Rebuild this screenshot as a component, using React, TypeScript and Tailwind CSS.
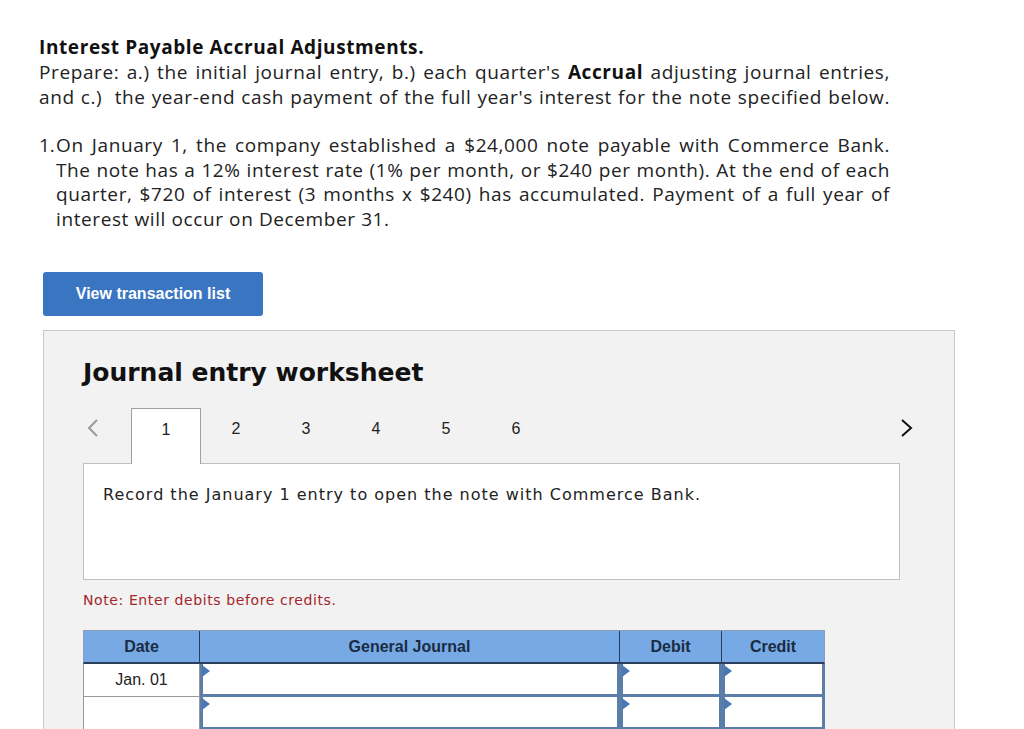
const jl = "block text-justify [text-align-last:justify]";

function Triangle() {
  return (
    <svg className="absolute -left-[1px] top-[1px]" width="8" height="12" viewBox="0 0 8 12">
      <polygon points="0,0 8,6 0,12" fill="#4a78b5" />
    </svg>
  );
}

function InputCell({ w }: { w: string }) {
  return <div className={`relative ${w} h-full border-x-[3px] border-b-[3px] border-[#5b7ea8] bg-white`}><Triangle /></div>;
}

export default function App() {
  const tabs = [1, 2, 3, 4, 5, 6];
  return (
    <div className="min-h-[729px] bg-white pl-[39px] pt-[35px] text-[#222] font-['Open_Sans','Liberation_Sans',sans-serif]">
      <div className="w-[851px] text-[19px] leading-[25px] tracking-[0.6px]">
        <div className="font-bold text-[#111]">Interest Payable Accrual Adjustments.</div>
        <span className={jl}>Prepare: a.) the initial journal entry, b.) each quarter's <b className="text-[#111]">Accrual</b> adjusting journal entries,</span>
        <span className={jl}>and c.)&nbsp; the year-end cash payment of the full year's interest for the note specified below.</span>
      </div>

      <div className="mt-[23px] flex w-[851px] text-[19px] leading-[24.5px] tracking-[0.6px]">
        <div className="w-[17px] shrink-0 tracking-normal">1.</div>
        <div className="flex-1">
          <span className={jl}>On January 1, the company established a $24,000 note payable with Commerce Bank.</span>
          <span className={jl}>The note has a 12% interest rate (1% per month, or $240 per month). At the end of each</span>
          <span className={jl}>quarter, $720 of interest (3 months x $240) has accumulated. Payment of a full year of</span>
          <span className="block">interest will occur on December 31.</span>
        </div>
      </div>

      <button className="ml-[4px] mt-[41px] flex h-[44px] w-[220px] items-center justify-center rounded-[3px] bg-[#3a75c2] text-[16px] font-bold text-white font-['Liberation_Sans',Arial,sans-serif]">
        View transaction list
      </button>

      <div className="ml-[4px] mt-[14px] h-[420px] w-[912px] border border-[#c8c8c8] bg-[#f2f2f2] pl-[39px] pt-[27px]">
        <h2 className="text-[25px] font-bold leading-[30px] text-[#111] font-['DejaVu_Sans','Verdana',sans-serif]">Journal entry worksheet</h2>

        <div className="mt-[20px] flex h-[55px] w-[830px] items-start font-['Liberation_Sans',Arial,sans-serif] text-[16px] text-[#222]">
          <div className="flex h-[40px] w-[48px] items-center pl-[4px]">
            <svg width="12" height="18" viewBox="0 0 12 18"><polyline points="10,1 2,9 10,17" fill="none" stroke="#999" strokeWidth="2" /></svg>
          </div>
          {tabs.map((t) => (
            <div key={t} className={`flex h-[55px] w-[70px] justify-center pt-[9px] ${t === 1 ? "relative z-10 h-[56px] border border-b-0 border-[#a0a0a0] bg-white" : ""}`}>{t}</div>
          ))}
          <div className="ml-auto flex h-[40px] items-center">
            <svg width="13" height="18" viewBox="0 0 13 18"><polyline points="2,1 11,9 2,17" fill="none" stroke="#111" strokeWidth="2" /></svg>
          </div>
        </div>

        <div className="h-[117px] w-[817px] border border-[#c0c0c0] bg-white px-[19px] pt-[20px] font-['DejaVu_Sans','Verdana',sans-serif] text-[16px] leading-[22px] tracking-[1px] text-[#222]">
          Record the January 1 entry to open the note with Commerce Bank.
        </div>

        <div className="mt-[10px] text-[14px] leading-[20px] tracking-[0.6px] text-[#a3262a] font-['DejaVu_Sans','Verdana',sans-serif]">Note: Enter debits before credits.</div>

        <div className="mt-[20px] w-[742px] font-['Liberation_Sans',Arial,sans-serif] text-[16px]">
          <div className="flex h-[34px] border border-b-2 border-[#8a9db5] border-b-[#2a3d5a] bg-[#77aae4] font-bold text-[#1c2b44]">
            <div className="flex w-[116px] items-center justify-center border-r border-[#2a3d5a]">Date</div>
            <div className="flex w-[420px] items-center justify-center border-r border-[#2a3d5a]">General Journal</div>
            <div className="flex w-[102px] items-center justify-center border-r border-[#2a3d5a]">Debit</div>
            <div className="flex flex-1 items-center justify-center">Credit</div>
          </div>
          {["Jan. 01", ""].map((d, i) => (
            <div key={i} className="flex h-[33px]">
              <div className="flex w-[117px] items-center justify-center border border-t-0 border-[#999] bg-white text-[#222]">{d}</div>
              <InputCell w="w-[420px]" />
              <InputCell w="w-[102px]" />
              <InputCell w="w-[103px]" />
            </div>
          ))}
        </div>
      </div>
    </div>
  );
}
